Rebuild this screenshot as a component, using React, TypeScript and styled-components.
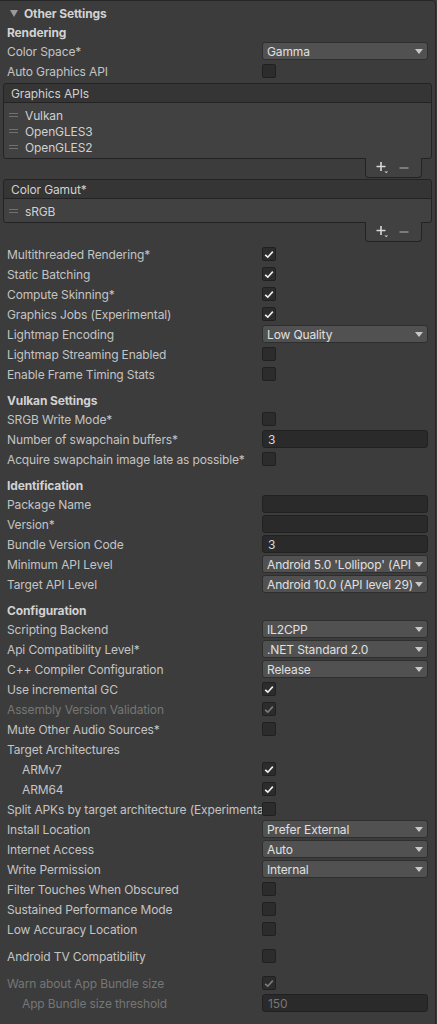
import React from "react";
import styled, { createGlobalStyle } from "styled-components";

const GlobalStyle = createGlobalStyle`
  html, body {
    margin: 0;
    padding: 0;
    background: #3c3c3c;
  }
  body {
    font-family: Inter, "Noto Sans", "Liberation Sans", sans-serif;
    font-size: 12px;
    letter-spacing: -0.13px;
    color: #c4c4c4;
  }
  #root { min-height: 1024px; }
`;

const Panel = styled.div`
  box-sizing: border-box;
  width: 436px;
  min-height: 1024px;
  padding: 3px 3px 0 3px;
  border-top: 1px solid #262626;
  border-right: 1px solid #262626;
  border-top-right-radius: 4px;
  background: #3c3c3c;
  display: flex;
  flex-direction: column;
`;

const Foldout = styled.div`
  height: 19px;
  display: flex;
  align-items: center;
  gap: 6px;
  padding-left: 7px;
  font-weight: 700;
  color: #d2d2d2;
`;

const FoldArrow = styled.span`
  width: 0;
  height: 0;
  border-left: 4px solid transparent;
  border-right: 4px solid transparent;
  border-top: 7px solid #9a9a9a;
`;

const SectionHeader = styled.div<{ $top?: number }>`
  height: 18px;
  margin-top: ${(p) => p.$top ?? 0}px;
  display: flex;
  align-items: center;
  padding-left: 4px;
  font-weight: 700;
  color: #d2d2d2;
`;

const Row = styled.div<{ $top?: number }>`
  height: 20px;
  margin-top: ${(p) => p.$top ?? 0}px;
  display: flex;
  align-items: center;
`;

const Label = styled.div<{ $indent?: boolean; $disabled?: boolean }>`
  box-sizing: border-box;
  width: 259px;
  flex: none;
  padding-left: ${(p) => (p.$indent ? 19 : 4)}px;
  white-space: nowrap;
  overflow: hidden;
  color: ${(p) => (p.$disabled ? "#767676" : "#c4c4c4")};
`;

const Dropdown = styled.div`
  box-sizing: border-box;
  width: 166px;
  height: 18px;
  display: flex;
  align-items: center;
  padding: 0 4px 0 4px;
  background: #515151;
  border: 1px solid #2e2e2e;
  border-radius: 3px;
  color: #e0e0e0;
`;

const DropText = styled.span`
  flex: 1;
  white-space: nowrap;
  overflow: hidden;
`;

const DropArrow = styled.span`
  flex: none;
  margin-left: 1px;
  width: 0;
  height: 0;
  border-left: 4px solid transparent;
  border-right: 4px solid transparent;
  border-top: 5px solid #c8c8c8;
`;

const TextField = styled.div<{ $disabled?: boolean }>`
  box-sizing: border-box;
  width: 166px;
  height: 18px;
  display: flex;
  align-items: center;
  padding-left: 5px;
  background: #2a2a2a;
  border: 1px solid #212121;
  border-radius: 3px;
  color: ${(p) => (p.$disabled ? "#767676" : "#d6d6d6")};
`;

const CheckBox = styled.div`
  box-sizing: border-box;
  width: 14px;
  height: 14px;
  display: flex;
  align-items: center;
  justify-content: center;
  background: #2c2c2c;
  border: 1px solid #202020;
  border-radius: 2px;
`;

const ListHeader = styled.div<{ $top?: number }>`
  box-sizing: border-box;
  height: 20px;
  margin-top: ${(p) => p.$top ?? 0}px;
  display: flex;
  align-items: center;
  padding-left: 7px;
  background: #353535;
  border: 1px solid #232323;
  border-radius: 3px 3px 0 0;
  color: #d0d0d0;
`;

const ListBody = styled.div`
  box-sizing: border-box;
  padding: 4px 0 3px;
  margin-top: -1px;
  background: #414141;
  border: 1px solid #232323;
  border-radius: 0 0 3px 3px;
  display: flex;
  flex-direction: column;
`;

const ListItem = styled.div`
  height: 16px;
  display: flex;
  align-items: center;
  gap: 7px;
  padding-left: 5px;
  color: #d0d0d0;
`;

const DragHandle = styled.span`
  width: 9px;
  height: 4px;
  border-top: 1px solid #707070;
  border-bottom: 1px solid #707070;
  box-sizing: border-box;
`;

const ListFooter = styled.div`
  box-sizing: border-box;
  align-self: flex-end;
  width: 57px;
  height: 20px;
  margin-top: -1px;
  margin-right: 10px;
  display: flex;
  align-items: center;
  justify-content: space-around;
  padding: 0 6px;
  background: #414141;
  border: 1px solid #232323;
  border-top: none;
  border-radius: 0 0 4px 4px;
`;

const FooterButton = styled.span`
  width: 14px;
  height: 14px;
  display: flex;
  align-items: center;
  justify-content: center;
`;

const Check = ({ disabled }: { disabled?: boolean }) => (
  <svg width="10" height="9" viewBox="0 0 10 9">
    <path
      d="M1.2 4.8 L3.8 7.2 L8.8 1.6"
      fill="none"
      stroke={disabled ? "#7c7c7c" : "#f0f0f0"}
      strokeWidth="1.6"
    />
  </svg>
);

const PlusIcon = () => (
  <svg width="13" height="13" viewBox="0 0 13 13">
    <path d="M5 1 V10 M0.5 5.5 H9.5" stroke="#d8d8d8" strokeWidth="1.6" fill="none" />
    <path d="M8.5 10.5 H12 L10.25 12.3 Z" fill="#d8d8d8" />
  </svg>
);

const MinusIcon = () => (
  <svg width="10" height="10" viewBox="0 0 10 10">
    <path d="M0.5 5 H9.5" stroke="#8a8a8a" strokeWidth="1.6" />
  </svg>
);

type Field =
  | { kind: "drop"; value: string }
  | { kind: "text"; value?: string; disabled?: boolean }
  | { kind: "check"; checked?: boolean; disabled?: boolean }
  | { kind: "none" };

const FieldView = ({ f }: { f: Field }) => {
  if (f.kind === "drop")
    return (
      <Dropdown>
        <DropText>{f.value}</DropText>
        <DropArrow />
      </Dropdown>
    );
  if (f.kind === "text")
    return <TextField $disabled={f.disabled}>{f.value ?? ""}</TextField>;
  if (f.kind === "check")
    return <CheckBox>{f.checked && <Check disabled={f.disabled} />}</CheckBox>;
  return null;
};

const Prop = ({
  label,
  f,
  indent,
  disabled,
  top,
}: {
  label: string;
  f: Field;
  indent?: boolean;
  disabled?: boolean;
  top?: number;
}) => (
  <Row $top={top}>
    <Label $indent={indent} $disabled={disabled}>
      {label}
    </Label>
    <FieldView f={f} />
  </Row>
);

const ReorderList = ({ title, items, top }: { title: string; items: string[]; top?: number }) => (
  <>
    <ListHeader $top={top}>{title}</ListHeader>
    <ListBody>
      {items.map((it) => (
        <ListItem key={it}>
          <DragHandle />
          {it}
        </ListItem>
      ))}
    </ListBody>
    <ListFooter>
      <FooterButton>
        <PlusIcon />
      </FooterButton>
      <FooterButton>
        <MinusIcon />
      </FooterButton>
    </ListFooter>
  </>
);

const on: Field = { kind: "check", checked: true };
const off: Field = { kind: "check" };

export default function App() {
  return (
    <>
      <GlobalStyle />
      <Panel>
        <Foldout>
          <FoldArrow />
          Other Settings
        </Foldout>
        <SectionHeader>Rendering</SectionHeader>
        <Prop label="Color Space*" f={{ kind: "drop", value: "Gamma" }} />
        <Prop label="Auto Graphics API" f={off} />
        <ReorderList title="Graphics APIs" items={["Vulkan", "OpenGLES3", "OpenGLES2"]} top={2} />
        <ReorderList title="Color Gamut*" items={["sRGB"]} top={1} />
        <Prop label="Multithreaded Rendering*" f={on} top={2} />
        <Prop label="Static Batching" f={on} />
        <Prop label="Compute Skinning*" f={on} />
        <Prop label="Graphics Jobs (Experimental)" f={on} />
        <Prop label="Lightmap Encoding" f={{ kind: "drop", value: "Low Quality" }} />
        <Prop label="Lightmap Streaming Enabled" f={off} />
        <Prop label="Enable Frame Timing Stats" f={off} />

        <SectionHeader $top={7}>Vulkan Settings</SectionHeader>
        <Prop label="SRGB Write Mode*" f={off} />
        <Prop label="Number of swapchain buffers*" f={{ kind: "text", value: "3" }} />
        <Prop label="Acquire swapchain image late as possible*" f={off} />

        <SectionHeader $top={7}>Identification</SectionHeader>
        <Prop label="Package Name" f={{ kind: "text" }} />
        <Prop label="Version*" f={{ kind: "text" }} />
        <Prop label="Bundle Version Code" f={{ kind: "text", value: "3" }} />
        <Prop
          label="Minimum API Level"
          f={{ kind: "drop", value: "Android 5.0 'Lollipop' (API level 21)" }}
        />
        <Prop label="Target API Level" f={{ kind: "drop", value: "Android 10.0 (API level 29)" }} />

        <SectionHeader $top={7}>Configuration</SectionHeader>
        <Prop label="Scripting Backend" f={{ kind: "drop", value: "IL2CPP" }} />
        <Prop label="Api Compatibility Level*" f={{ kind: "drop", value: ".NET Standard 2.0" }} />
        <Prop label="C++ Compiler Configuration" f={{ kind: "drop", value: "Release" }} />
        <Prop label="Use incremental GC" f={on} />
        <Prop
          label="Assembly Version Validation"
          disabled
          f={{ kind: "check", checked: true, disabled: true }}
        />
        <Prop label="Mute Other Audio Sources*" f={off} />
        <Prop label="Target Architectures" f={{ kind: "none" }} />
        <Prop label="ARMv7" indent f={on} />
        <Prop label="ARM64" indent f={on} />
        <Prop label="Split APKs by target architecture (Experimental)" f={off} />
        <Prop label="Install Location" f={{ kind: "drop", value: "Prefer External" }} />
        <Prop label="Internet Access" f={{ kind: "drop", value: "Auto" }} />
        <Prop label="Write Permission" f={{ kind: "drop", value: "Internal" }} />
        <Prop label="Filter Touches When Obscured" f={off} />
        <Prop label="Sustained Performance Mode" f={off} />
        <Prop label="Low Accuracy Location" f={off} />
        <Prop label="Android TV Compatibility" f={off} top={7} />
        <Prop
          label="Warn about App Bundle size"
          disabled
          top={7}
          f={{ kind: "check", checked: true, disabled: true }}
        />
        <Prop
          label="App Bundle size threshold"
          indent
          disabled
          f={{ kind: "text", value: "150", disabled: true }}
        />
      </Panel>
    </>
  );
}
